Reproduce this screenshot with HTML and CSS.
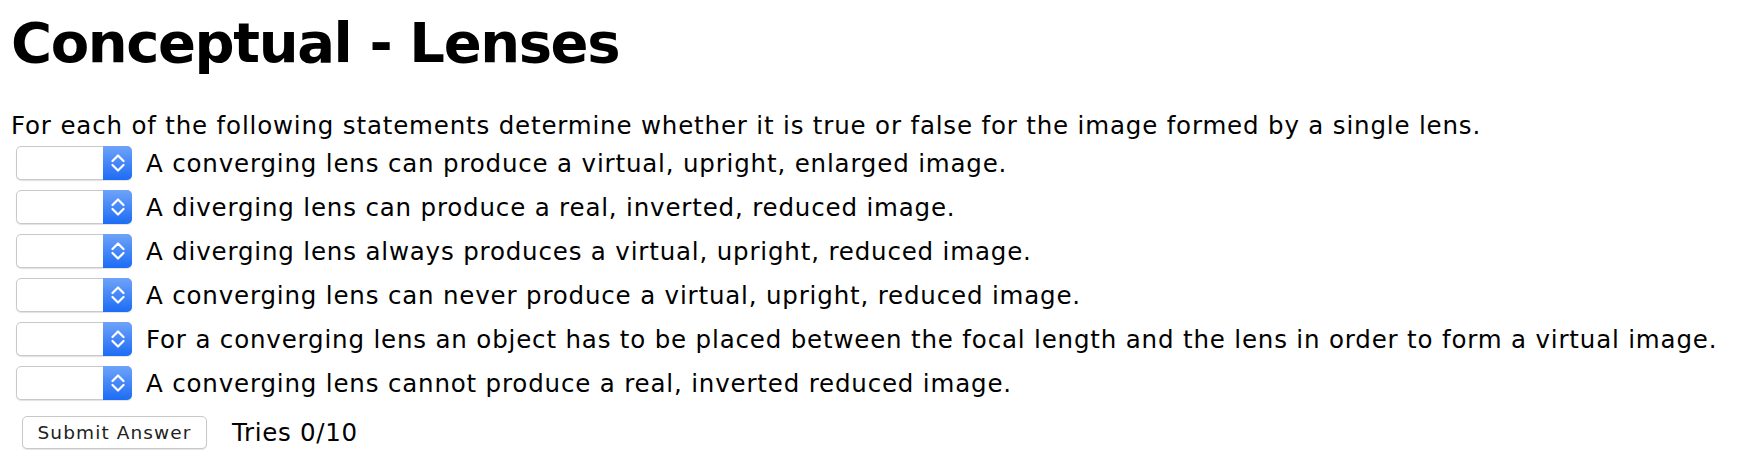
FILE: index.html
```html
<!DOCTYPE html>
<html lang="en">
<head>
<meta charset="utf-8">
<title>Conceptual - Lenses</title>
<link rel="stylesheet" href="styles.css">
</head>
<body>
<div class="page">
  <h1 class="title">Conceptual - Lenses</h1>
  <p class="intro">For each of the following statements determine whether it is true or false for the image formed by a single lens.</p>
  <div class="questions">
    <div class="row">
      <span class="select-wrap"><select class="tf"><option></option><option>True</option><option>False</option></select><span class="stepper"><svg width="14" height="20" viewBox="0 0 14 20"><path d="M1.5 8 L7 2.5 L12.5 8 M1.5 12 L7 17.5 L12.5 12" fill="none" stroke="#fff" stroke-width="2.2" stroke-linecap="round" stroke-linejoin="round"/></svg></span></span>
      <span class="stmt">A converging lens can produce a virtual, upright, enlarged image.</span>
    </div>
    <div class="row">
      <span class="select-wrap"><select class="tf"><option></option><option>True</option><option>False</option></select><span class="stepper"><svg width="14" height="20" viewBox="0 0 14 20"><path d="M1.5 8 L7 2.5 L12.5 8 M1.5 12 L7 17.5 L12.5 12" fill="none" stroke="#fff" stroke-width="2.2" stroke-linecap="round" stroke-linejoin="round"/></svg></span></span>
      <span class="stmt">A diverging lens can produce a real, inverted, reduced image.</span>
    </div>
    <div class="row">
      <span class="select-wrap"><select class="tf"><option></option><option>True</option><option>False</option></select><span class="stepper"><svg width="14" height="20" viewBox="0 0 14 20"><path d="M1.5 8 L7 2.5 L12.5 8 M1.5 12 L7 17.5 L12.5 12" fill="none" stroke="#fff" stroke-width="2.2" stroke-linecap="round" stroke-linejoin="round"/></svg></span></span>
      <span class="stmt">A diverging lens always produces a virtual, upright, reduced image.</span>
    </div>
    <div class="row">
      <span class="select-wrap"><select class="tf"><option></option><option>True</option><option>False</option></select><span class="stepper"><svg width="14" height="20" viewBox="0 0 14 20"><path d="M1.5 8 L7 2.5 L12.5 8 M1.5 12 L7 17.5 L12.5 12" fill="none" stroke="#fff" stroke-width="2.2" stroke-linecap="round" stroke-linejoin="round"/></svg></span></span>
      <span class="stmt">A converging lens can never produce a virtual, upright, reduced image.</span>
    </div>
    <div class="row">
      <span class="select-wrap"><select class="tf"><option></option><option>True</option><option>False</option></select><span class="stepper"><svg width="14" height="20" viewBox="0 0 14 20"><path d="M1.5 8 L7 2.5 L12.5 8 M1.5 12 L7 17.5 L12.5 12" fill="none" stroke="#fff" stroke-width="2.2" stroke-linecap="round" stroke-linejoin="round"/></svg></span></span>
      <span class="stmt">For a converging lens an object has to be placed between the focal length and the lens in order to form a virtual image.</span>
    </div>
    <div class="row">
      <span class="select-wrap"><select class="tf"><option></option><option>True</option><option>False</option></select><span class="stepper"><svg width="14" height="20" viewBox="0 0 14 20"><path d="M1.5 8 L7 2.5 L12.5 8 M1.5 12 L7 17.5 L12.5 12" fill="none" stroke="#fff" stroke-width="2.2" stroke-linecap="round" stroke-linejoin="round"/></svg></span></span>
      <span class="stmt">A converging lens cannot produce a real, inverted reduced image.</span>
    </div>
  </div>
  <div class="submit-row">
    <button class="submit" type="button">Submit Answer</button>
    <span class="tries">Tries 0/10</span>
  </div>
</div>
</body>
</html>
```

FILE: styles.css
```css
html, body {
  margin: 0;
  padding: 0;
  background: #fff;
}

body {
  font-family: "DejaVu Sans", Verdana, sans-serif;
  color: #000;
}

.page {
  padding: 8px 11px;
}

.title {
  margin: 0;
  font-size: 56px;
  line-height: 70px;
  letter-spacing: -1.4px;
  font-weight: bold;
}

.intro {
  margin: 33px 0 0 0;
  font-size: 24.5px;
  letter-spacing: 0.83px;
  line-height: 30px;
}

.questions {
  display: flex;
  flex-direction: column;
}

.row {
  display: flex;
  align-items: center;
  height: 44px;
  font-size: 24.5px;
  letter-spacing: 0.83px;
}

.select-wrap {
  position: relative;
  display: inline-block;
  width: 116px;
  height: 34px;
  margin-left: 5px;
  flex: none;
}

.tf {
  appearance: none;
  -webkit-appearance: none;
  width: 116px;
  height: 34px;
  margin: 0;
  padding: 0 8px;
  border: 1px solid #c9c9c9;
  border-radius: 5px;
  background: #fff;
  box-shadow: 0 1px 1px rgba(0, 0, 0, 0.12);
  font: inherit;
  box-sizing: border-box;
}

.stepper {
  position: absolute;
  top: 0;
  right: 0;
  width: 29px;
  height: 34px;
  border-radius: 0 5px 5px 0;
  background: linear-gradient(#6fa3f9, #1c6cf5);
  display: flex;
  align-items: center;
  justify-content: center;
  pointer-events: none;
}

.stmt {
  margin-left: 14px;
  white-space: nowrap;
}

.submit-row {
  display: flex;
  align-items: center;
  margin-top: 11px;
  margin-left: 11px;
  height: 33px;
}

.submit {
  height: 33px;
  width: 185px;
  margin: 0;
  padding: 0;
  border: 1px solid #c8c8c8;
  border-radius: 5px;
  background: #fff;
  box-shadow: 0 1px 1px rgba(0, 0, 0, 0.1);
  font-family: "DejaVu Sans", Verdana, sans-serif;
  font-size: 18.5px;
  letter-spacing: 1.1px;
  color: #222;
}

.tries {
  margin-left: 25px;
  font-size: 24.5px;
  letter-spacing: 0.7px;
}
```
